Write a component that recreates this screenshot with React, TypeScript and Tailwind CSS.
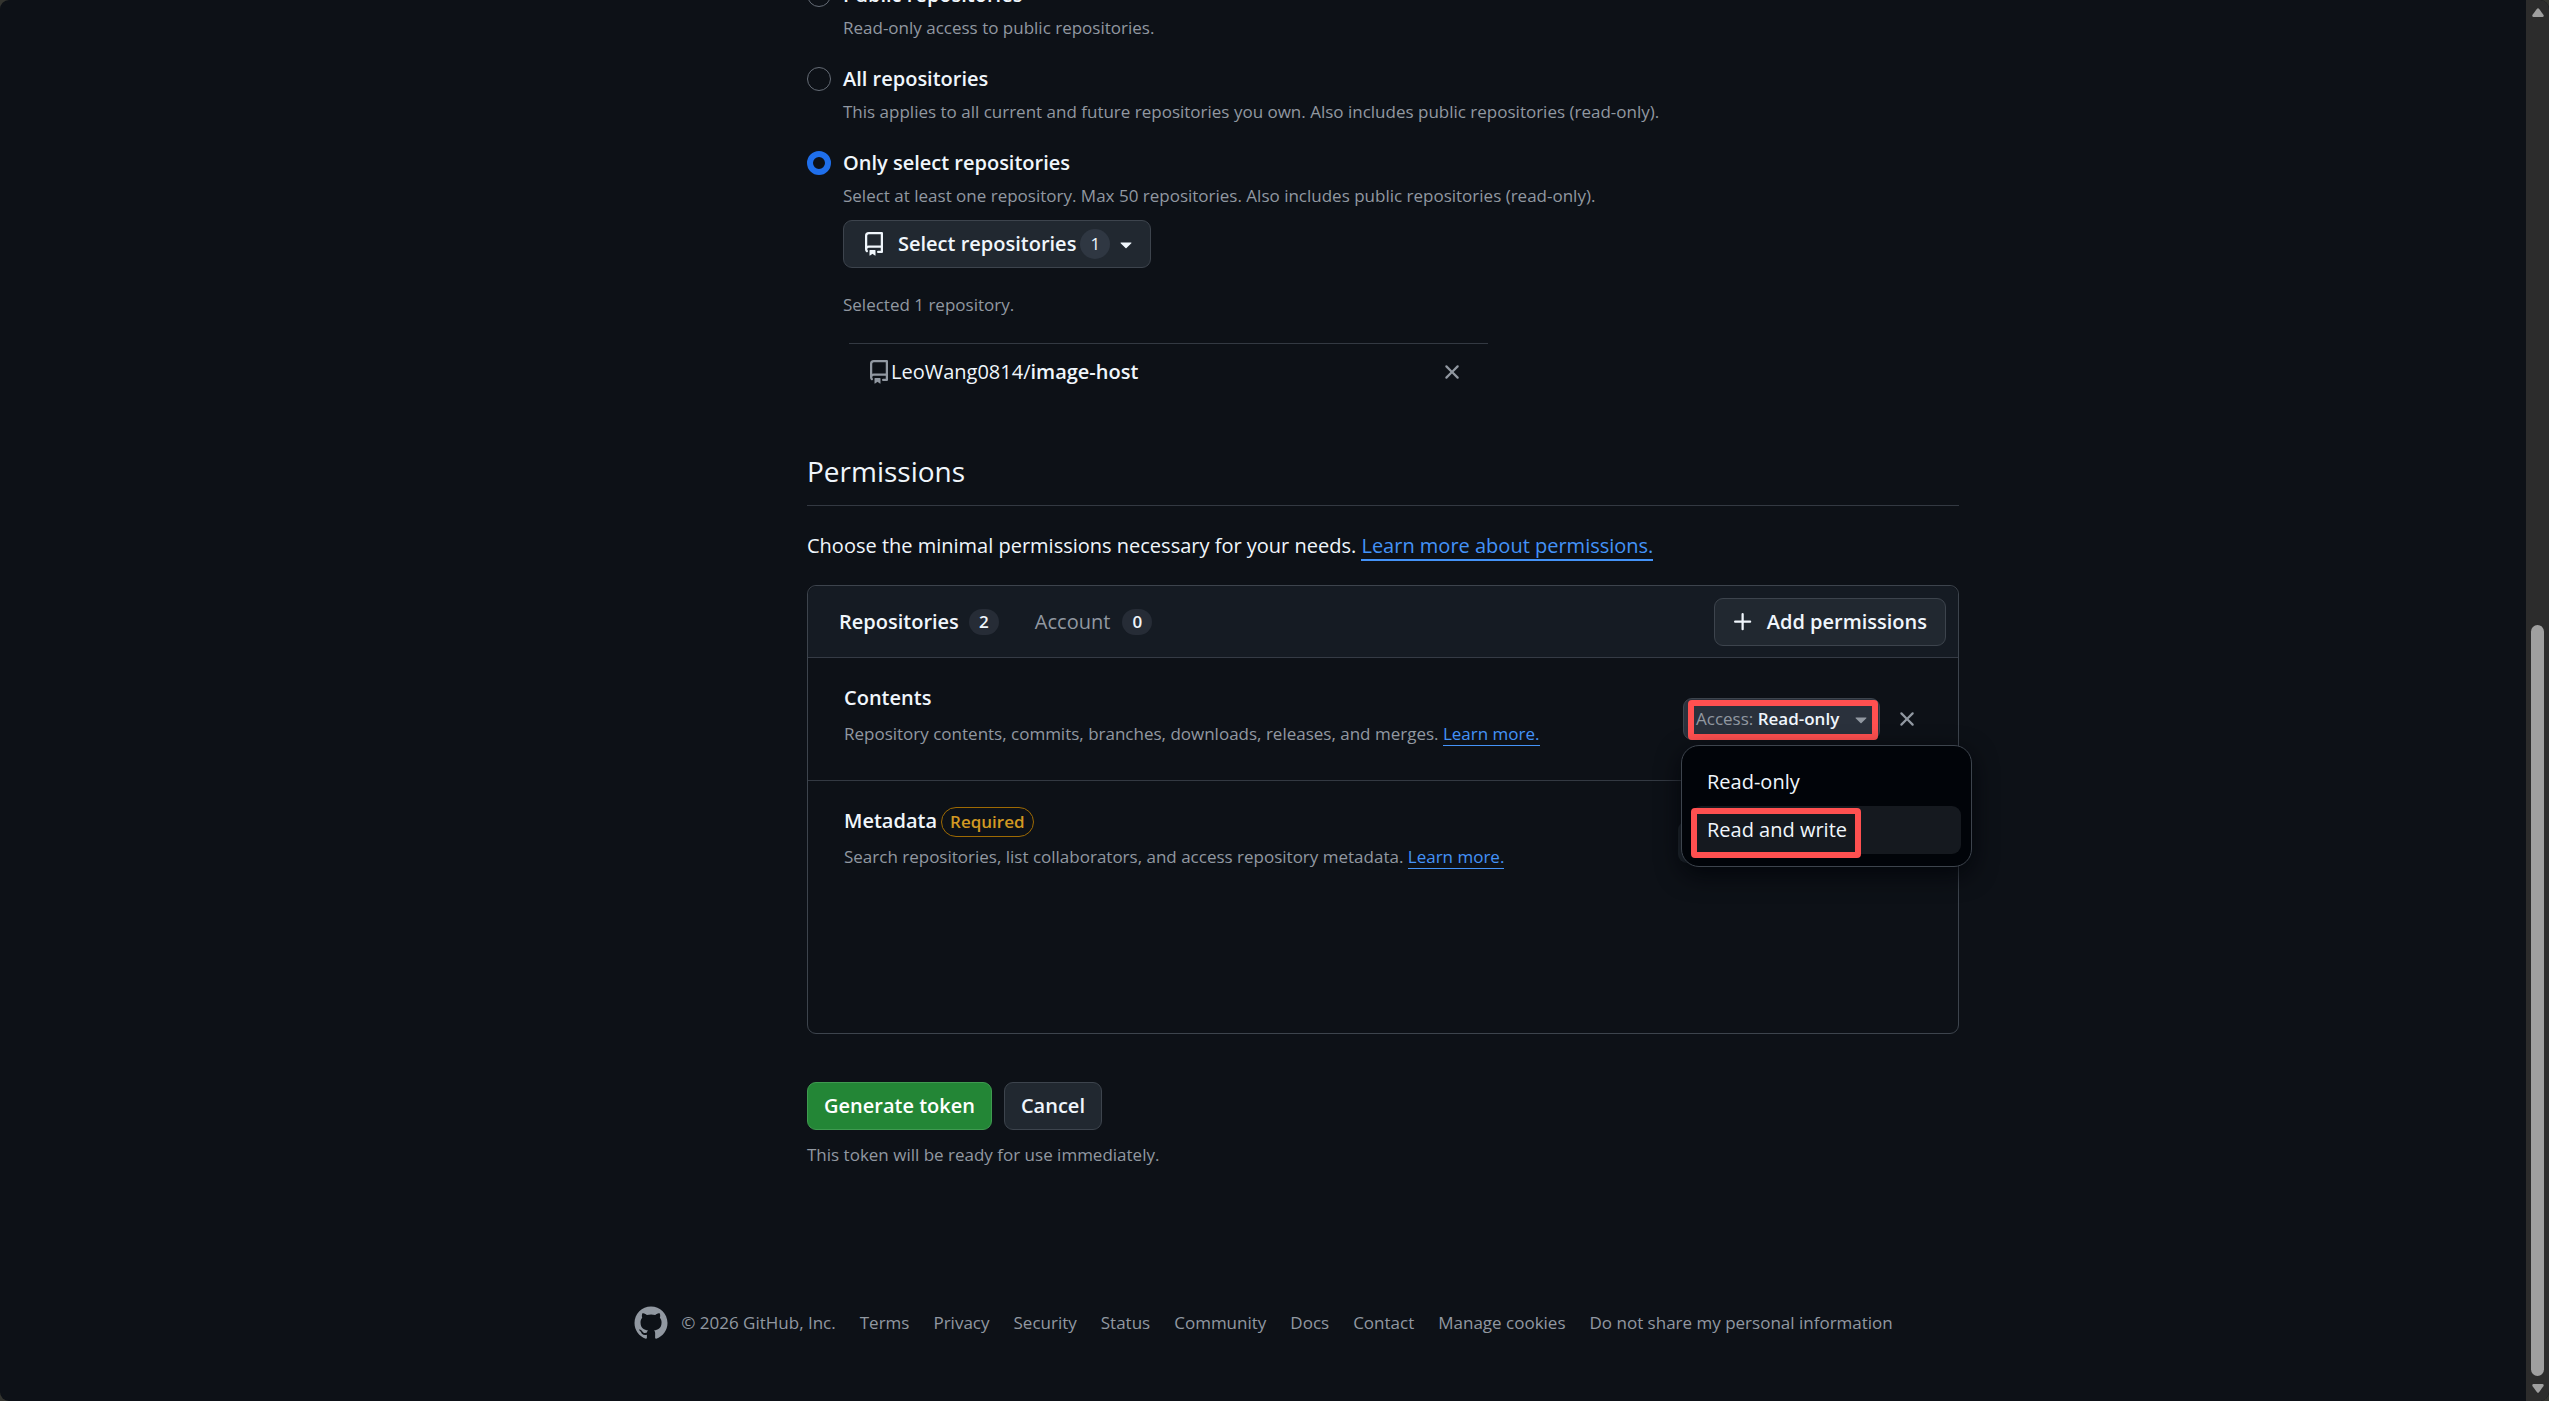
import type { ReactNode } from 'react';

const ICONS = {
  repo: 'M2 2.5A2.5 2.5 0 0 1 4.5 0h8.75a.75.75 0 0 1 .75.75v12.5a.75.75 0 0 1-.75.75h-2.5a.75.75 0 0 1 0-1.5h1.75v-2h-8a1 1 0 0 0-.714 1.7.75.75 0 1 1-1.072 1.05A2.495 2.495 0 0 1 2 11.5Zm10.5-1h-8a1 1 0 0 0-1 1v6.708A2.486 2.486 0 0 1 4.5 9h8ZM5 12.25a.25.25 0 0 1 .25-.25h3.5a.25.25 0 0 1 .25.25v3.25a.25.25 0 0 1-.4.2l-1.45-1.087a.249.249 0 0 0-.3 0L5.4 15.7a.25.25 0 0 1-.4-.2Z',
  x: 'M3.72 3.72a.75.75 0 0 1 1.06 0L8 6.94l3.22-3.22a.749.749 0 0 1 1.275.326.749.749 0 0 1-.215.734L9.06 8l3.22 3.22a.749.749 0 0 1-.326 1.275.749.749 0 0 1-.734-.215L8 9.06l-3.22 3.22a.751.751 0 0 1-1.042-.018.751.751 0 0 1-.018-1.042L6.94 8 3.72 4.78a.75.75 0 0 1 0-1.06Z',
  plus: 'M7.75 2a.75.75 0 0 1 .75.75V7h4.25a.75.75 0 0 1 0 1.5H8.5v4.25a.75.75 0 0 1-1.5 0V8.5H2.75a.75.75 0 0 1 0-1.5H7V2.75A.75.75 0 0 1 7.75 2Z',
  caret: 'm4.427 7.427 3.396 3.396a.25.25 0 0 0 .354 0l3.396-3.396A.25.25 0 0 0 11.396 7H4.604a.25.25 0 0 0-.177.427Z',
};

const FOOTER_LINKS = [
  'Terms',
  'Privacy',
  'Security',
  'Status',
  'Community',
  'Docs',
  'Contact',
  'Manage cookies',
  'Do not share my personal information',
];

function Icon({ name, className = '' }: { name: keyof typeof ICONS; className?: string }) {
  return (
    <svg viewBox="0 0 16 16" fill="currentColor" aria-hidden="true" className={`size-6 shrink-0 ${className}`}>
      <path d={ICONS[name]} />
    </svg>
  );
}

function GitHubMark() {
  return (
    <svg viewBox="0 0 24 24" fill="currentColor" aria-hidden="true" className="size-9 shrink-0">
      <path d="M12 1C5.9225 1 1 5.9225 1 12C1 16.8675 4.14875 20.9787 8.52125 22.4362C9.07125 22.5325 9.2775 22.2025 9.2775 21.9137C9.2775 21.6525 9.26375 20.7862 9.26375 19.865C6.5 20.3737 5.785 19.1912 5.565 18.5725C5.44125 18.2562 4.905 17.28 4.4375 17.0187C4.0525 16.8125 3.5025 16.3037 4.42375 16.29C5.29 16.2762 5.90875 17.0875 6.115 17.4175C7.105 19.0812 8.68625 18.6137 9.31875 18.325C9.415 17.61 9.70375 17.1287 10.02 16.8537C7.5725 16.5787 5.015 15.63 5.015 11.4225C5.015 10.2262 5.44125 9.23625 6.1425 8.46625C6.0325 8.19125 5.6475 7.06375 6.2525 5.55125C6.2525 5.55125 7.17375 5.2625 9.2775 6.67875C10.1575 6.43125 11.0925 6.3075 12.0275 6.3075C12.9625 6.3075 13.8975 6.43125 14.7775 6.67875C16.8813 5.24875 17.8025 5.55125 17.8025 5.55125C18.4075 7.06375 18.0225 8.19125 17.9125 8.46625C18.6138 9.23625 19.04 10.2125 19.04 11.4225C19.04 15.6437 16.4688 16.5787 14.0213 16.8537C14.42 17.1975 14.7638 17.8575 14.7638 18.8887C14.7638 20.36 14.75 21.5425 14.75 21.9137C14.75 22.2025 14.9563 22.5462 15.5063 22.4362C19.8513 20.9787 23 16.8537 23 12C23 5.9225 18.0775 1 12 1Z" />
    </svg>
  );
}

function RadioOption({ id, label, hint, checked = false, children }: { id: string; label: string; hint: string; checked?: boolean; children?: ReactNode }) {
  return (
    <div>
      <div className="flex items-center gap-3">
        <input
          type="radio"
          id={id}
          name="repository-access"
          defaultChecked={checked}
          className="size-6 shrink-0 appearance-none rounded-full border border-[#656c76] checked:border-[6px] checked:border-[#1f6feb]"
        />
        <label htmlFor={id} className="text-[20px] leading-[30px] font-semibold">{label}</label>
      </div>
      <div className="pl-9">
        <p className="mt-1.5 text-[17px] leading-6 text-[#9198a1]">{hint}</p>
        {children}
      </div>
    </div>
  );
}

function Counter({ children }: { children: ReactNode }) {
  return (
    <span className="flex h-[26px] min-w-[30px] items-center justify-center rounded-full bg-[#262c36] px-2 text-[17px] leading-6 font-semibold text-[#f0f6fc]">
      {children}
    </span>
  );
}

function LearnMore() {
  return <a href="#learn-more" className="border-b border-[#4493f8] text-[#4493f8]">Learn more.</a>;
}

// Red frame drawn round a step of the walkthrough
function Highlight({ className }: { className: string }) {
  return <span aria-hidden="true" className={`pointer-events-none absolute rounded-[4px] border-[6px] border-[#ff5050] ${className}`} />;
}

function AccessMenu() {
  return (
    <div role="menu" className="absolute top-[47px] left-[-2px] z-10 w-[291px] rounded-[18px] border border-[#3d444d] bg-[#010409] px-2.5 py-3 text-[20px] leading-[30px] shadow-[0_8px_24px_rgba(1,4,9,0.8)]">
      <button type="button" role="menuitem" className="block h-12 w-full rounded-[9px] px-[15px] text-left">Read-only</button>
      <button type="button" role="menuitem" className="relative block h-12 w-full rounded-[9px] bg-[#15191f] px-[15px] text-left">
        Read and write
        <Highlight className="top-0.5 -left-px h-[50px] w-[170px]" />
      </button>
    </div>
  );
}

function PermissionsPanel() {
  return (
    <section className="mt-[23px] min-h-[449px] rounded-[9px] border border-[#3d444d]">
      <div className="flex h-[72px] items-center justify-between rounded-t-[9px] border-b border-[#3d444d]/80 bg-[#151b23] pr-3 pl-[31px]">
        <div role="tablist" className="flex gap-9 text-[20px] leading-[30px]">
          <button type="button" role="tab" aria-selected="true" className="flex items-center gap-2.5 font-semibold">
            Repositories <Counter>2</Counter>
          </button>
          <button type="button" role="tab" aria-selected="false" className="flex items-center gap-3 font-medium text-[#9198a1]">
            Account <Counter>0</Counter>
          </button>
        </div>
        <button type="button" className="flex h-12 items-center gap-3 rounded-[9px] border border-[#3d444d] bg-[#212830] pr-[18px] pl-4 text-[20px] leading-[30px] font-semibold">
          <Icon name="plus" />
          Add permissions
        </button>
      </div>

      <div className="flex items-center justify-between border-b border-[#3d444d]/80 pr-9 pl-9">
        <div className="pt-6 pb-[34px]">
          <h3 className="text-[20px] leading-8 font-semibold">Contents</h3>
          <p className="mt-2 text-[17px] leading-6 text-[#9198a1]">
            Repository contents, commits, branches, downloads, releases, and merges. <LearnMore />
          </p>
        </div>
        <div className="flex items-center gap-3">
          <div className="relative">
            <button
              type="button"
              aria-haspopup="menu"
              aria-expanded="true"
              className="flex h-[42px] w-[197px] items-center justify-between rounded-[9px] border border-[#3d444d] bg-[#2a313c] pr-1.5 pl-3 text-[17px] leading-6"
            >
              <span className="whitespace-nowrap text-[#9198a1]">
                Access: <span className="font-semibold text-[#f0f6fc]">Read-only</span>
              </span>
              <Icon name="caret" className="text-[#9198a1]" />
            </button>
            <Highlight className="top-0.5 left-[5px] h-10 w-[190px]" />
            <AccessMenu />
          </div>
          <button type="button" aria-label="Remove Contents permission" className="flex w-[30px] justify-center text-[#9198a1]">
            <Icon name="x" />
          </button>
        </div>
      </div>

      <div className="flex items-center justify-between pr-[83px] pl-9">
        <div className="pt-6 pb-[34px]">
          <h3 className="flex items-end gap-1 text-[20px] leading-8 font-semibold">
            Metadata
            <span className="flex h-[30px] items-center rounded-full border border-[#9e6a03] px-2 text-[17px] leading-6 text-[#d29922]">Required</span>
          </h3>
          <p className="mt-2 text-[17px] leading-6 text-[#9198a1]">
            Search repositories, list collaborators, and access repository metadata. <LearnMore />
          </p>
        </div>
        {/* Covered by the open access menu above it */}
        <button type="button" aria-label="Metadata access" className="h-[42px] w-[197px] rounded-[9px] bg-[#212830]" />
      </div>
    </section>
  );
}

function Footer() {
  return (
    <footer className="mt-[138px] flex items-center justify-center gap-3 pb-16 text-[17px] leading-6 text-[#9198a1]">
      <GitHubMark />
      <div className="flex flex-wrap gap-6">
        <span>© 2026 GitHub, Inc.</span>
        {FOOTER_LINKS.map((link) => (
          <a key={link} href="#footer">{link}</a>
        ))}
      </div>
    </footer>
  );
}

function ScrollArrow({ className = '' }: { className?: string }) {
  return (
    <svg viewBox="0 0 12 9" fill="#9f9f9f" aria-hidden="true" className={`h-[9px] w-3 shrink-0 ${className}`}>
      <path d="M5 .8Q6-.4 7 .8L11.6 7Q12 9 10.5 9H1.5Q0 9 .4 7Z" />
    </svg>
  );
}

function Scrollbar() {
  return (
    <div aria-hidden="true" className="flex w-[23px] shrink-0 flex-col items-center gap-2 bg-[#2c2c2c] py-2">
      <ScrollArrow />
      <div className="flex w-[13px] grow flex-col">
        <div className="grow-4" />
        <div className="grow-5 rounded-full bg-[#9f9f9f]" />
      </div>
      <ScrollArrow className="rotate-180" />
    </div>
  );
}

function App() {
  return (
    <div className="bg-[#33342f]">
      <div className="flex h-screen overflow-hidden rounded-[9px] bg-[#0d1117] font-['Open_Sans',sans-serif] text-[#f0f6fc]">
        <div className="min-w-0 grow overflow-hidden">
          <main className="mx-auto -mt-5 max-w-[1392px] pl-60">
            <div role="radiogroup" aria-label="Repository access" className="flex flex-col gap-6">
              <RadioOption id="public" label="Public repositories" hint="Read-only access to public repositories." />
              <RadioOption id="all" label="All repositories" hint="This applies to all current and future repositories you own. Also includes public repositories (read-only)." />
              <RadioOption
                id="select"
                label="Only select repositories"
                hint="Select at least one repository. Max 50 repositories. Also includes public repositories (read-only)."
                checked
              >
                <button type="button" className="mt-3 flex h-12 items-center rounded-[9px] border border-[#3d444d] bg-[#212830] pr-3 pl-[18px] text-[20px] leading-[30px] font-semibold">
                  <Icon name="repo" />
                  <span className="ml-3">Select repositories</span>
                  <span className="ml-1 flex h-[30px] w-[30px] items-center justify-center rounded-full bg-[#2f3742] text-[17px] font-medium">1</span>
                  <Icon name="caret" className="ml-1" />
                </button>
                <p className="mt-[25px] text-[17px] leading-6 text-[#9198a1]">Selected 1 repository.</p>
                <div className="mt-[26px] ml-1.5 flex h-[57px] max-w-[639px] items-center border-t border-[#3d444d]/80 pr-6 pl-[18px]">
                  <Icon name="repo" className="text-[#9198a1]" />
                  <span className="grow text-[20px] leading-[30px]">
                    LeoWang0814/<strong className="font-semibold">image-host</strong>
                  </span>
                  <button type="button" aria-label="Remove LeoWang0814/image-host" className="text-[#9198a1]">
                    <Icon name="x" />
                  </button>
                </div>
              </RadioOption>
            </div>

            <h2 className="mt-[49px] border-b border-[#3d444d]/80 pb-3 text-[28px] leading-[44px]">Permissions</h2>
            <p className="mt-6 text-[20px] leading-8">
              Choose the minimal permissions necessary for your needs.{' '}
              <a href="#permissions" className="border-b-2 border-[#4493f8] text-[#4493f8]">Learn more about permissions.</a>
            </p>

            <PermissionsPanel />

            <div className="mt-12 flex gap-3 text-[20px] leading-[30px] font-semibold">
              <button type="button" className="h-12 rounded-[9px] border border-[#3f9a50] bg-[#238636] px-4 text-white">Generate token</button>
              <button type="button" className="h-12 rounded-[9px] border border-[#3d444d] bg-[#212830] px-4">Cancel</button>
            </div>
            <p className="mt-[13px] text-[17px] leading-6 text-[#9198a1]">This token will be ready for use immediately.</p>
          </main>
          <Footer />
        </div>
        <Scrollbar />
      </div>
    </div>
  );
}

export default App;
